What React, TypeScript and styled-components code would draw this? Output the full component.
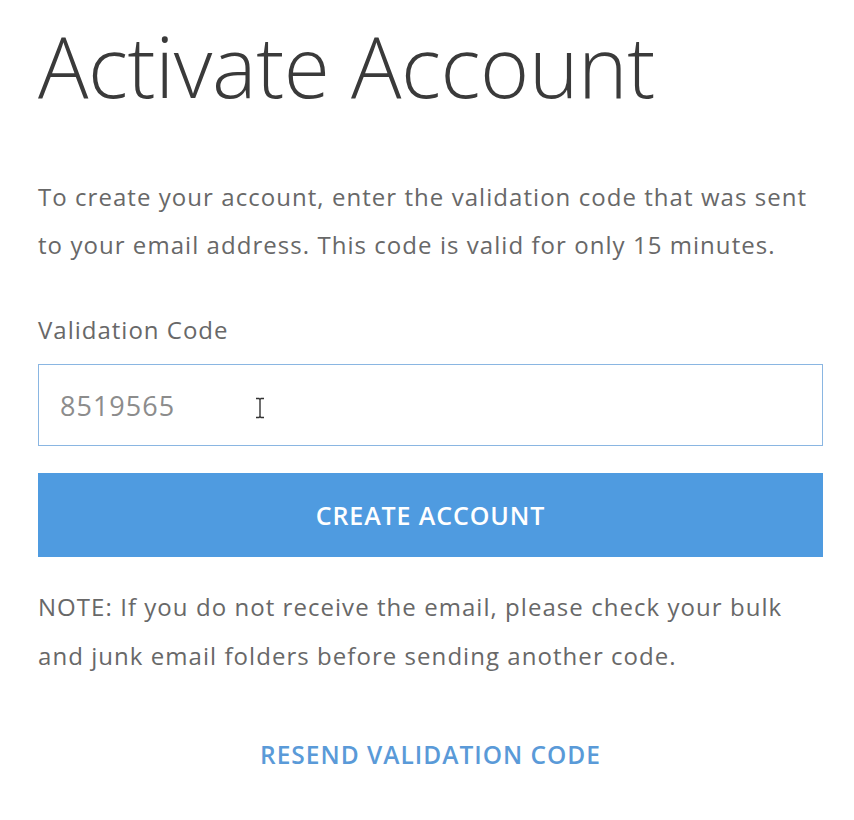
import styled, { createGlobalStyle } from 'styled-components';

const GlobalStyle = createGlobalStyle`
    body {
        margin: 0;
        background: #ffffff;
        font-family: "Open Sans", "Noto Sans", sans-serif;
    }
`;

const App = () => {
    return (
        <>
            <GlobalStyle />
            <Page>
                <Title>Activate Account</Title>
                <Intro>
                    To create your account, enter the validation code that was sent to your email address. This code is valid for only 15 minutes.
                </Intro>
                <Field>
                    <Label htmlFor="code">Validation Code</Label>
                    <InputWrapper>
                        <CodeInput id="code" defaultValue="8519565" />
                        <Cursor width="10" height="22" viewBox="0 0 10 22">
                            <path d="M1 1.5h3l1 1 1-1h3M5 2.5v17M1 20.5h3l1-1 1 1h3" fill="none" stroke="#333" strokeWidth="1.4" />
                        </Cursor>
                    </InputWrapper>
                </Field>
                <PrimaryButton type="button">Create Account</PrimaryButton>
                <Note>
                    NOTE: If you do not receive the email, please check your bulk and junk email folders before sending another code.
                </Note>
                <LinkRow>
                    <TextLink href="#">Resend Validation Code</TextLink>
                </LinkRow>
            </Page>
        </>
    );
};

const Page = styled.div`
    width: 785px;
    padding: 20px 0 0 38px;
    display: flex;
    flex-direction: column;
`;

const Title = styled.h1`
    margin: 0;
    font-family: "Open Sans", sans-serif;
    font-weight: 300;
    font-size: 84px;
    line-height: 92px;
    color: #3a3a3a;
    letter-spacing: -0.4px;
`;

const Intro = styled.p`
    margin: 61px 0 0;
    font-size: 24px;
    line-height: 48px;
    color: #686868;
    letter-spacing: 1.05px;
`;

const Field = styled.div`
    display: flex;
    flex-direction: column;
    margin-top: 46px;
    gap: 19px;
`;

const Label = styled.label`
    font-size: 24px;
    line-height: 30px;
    color: #686868;
    letter-spacing: 1px;
`;

const InputWrapper = styled.div`
    position: relative;
`;

const CodeInput = styled.input`
    box-sizing: border-box;
    width: 100%;
    height: 82px;
    padding: 0 21px;
    border: 1.5px solid #8ab6e2;
    outline: none;
    font-family: "Open Sans", sans-serif;
    font-size: 27px;
    letter-spacing: 1px;
    color: #8c8c8c;
    background: #ffffff;
`;

const Cursor = styled.svg`
    position: absolute;
    left: 217px;
    top: 33px;
`;

const PrimaryButton = styled.button`
    margin-top: 27px;
    height: 84px;
    border: none;
    background: #4f9be0;
    color: #ffffff;
    font-family: "Open Sans", sans-serif;
    font-weight: 600;
    font-size: 25px;
    letter-spacing: 0.9px;
    text-transform: uppercase;
    cursor: pointer;
`;

const Note = styled.p`
    margin: 25px 0 0;
    font-size: 24px;
    line-height: 49px;
    color: #686868;
    letter-spacing: 1.05px;
`;

const LinkRow = styled.div`
    display: flex;
    justify-content: center;
    margin-top: 60px;
`;

const TextLink = styled.a`
    font-size: 24.5px;
    line-height: 30px;
    font-weight: 600;
    letter-spacing: 1px;
    text-transform: uppercase;
    text-decoration: none;
    color: #5a9ad8;
`;

export default App;
